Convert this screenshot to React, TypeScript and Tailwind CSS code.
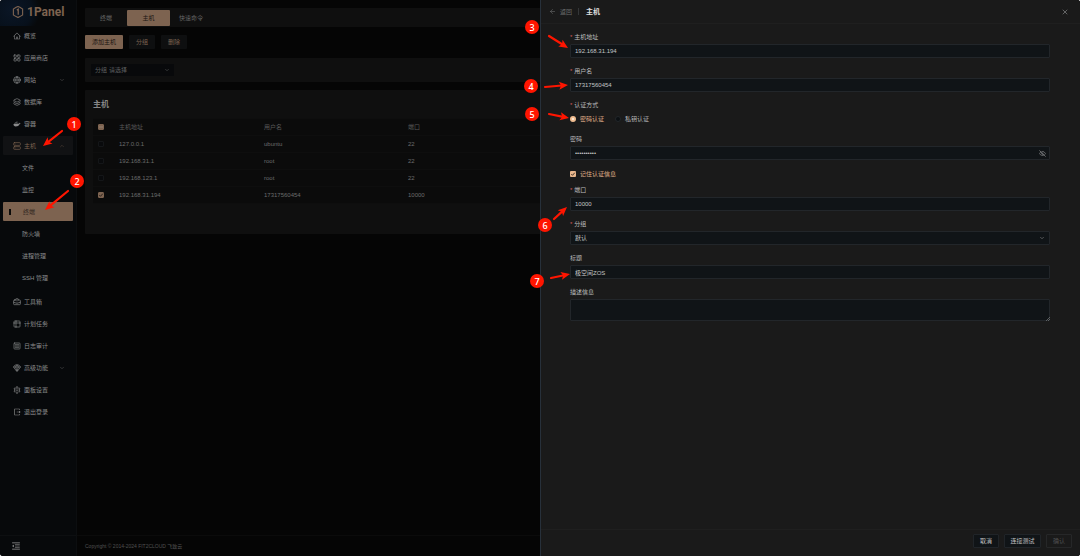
import { useState } from "react";
import type { ReactNode } from "react";
import {
    ArrowLeft,
    BriefcaseBusiness,
    ChevronDown,
    ChevronUp,
    EyeOff,
    Gem,
    Globe,
    Layers,
    LayoutGrid,
    Server,
    SquareMenu,
    Table2,
    X,
} from "lucide-react";
import { AiOutlineDocker, AiOutlineHome, AiOutlineMenuFold, AiOutlineSetting } from "react-icons/ai";
import { RiLogoutBoxRLine } from "react-icons/ri";
import clsx from "clsx";

type NavItem = { label: string; icon: ReactNode; arrow?: boolean };

const ICON = "w-2 h-2";

const topItems: NavItem[] = [
    { label: "概览", icon: <AiOutlineHome className={ICON} /> },
    { label: "应用商店", icon: <LayoutGrid className={ICON} /> },
    { label: "网站", icon: <Globe className={ICON} />, arrow: true },
    { label: "数据库", icon: <Layers className={ICON} /> },
    { label: "容器", icon: <AiOutlineDocker className={ICON} /> },
];

const hostItems = ["文件", "监控", "终端", "防火墙", "进程管理", "SSH 管理"];

const bottomItems: NavItem[] = [
    { label: "工具箱", icon: <BriefcaseBusiness className={ICON} /> },
    { label: "计划任务", icon: <Table2 className={ICON} /> },
    { label: "日志审计", icon: <SquareMenu className={ICON} /> },
    { label: "高级功能", icon: <Gem className={ICON} />, arrow: true },
    { label: "面板设置", icon: <AiOutlineSetting className={ICON} /> },
    { label: "退出登录", icon: <RiLogoutBoxRLine className={ICON} /> },
];

const hosts = [
    { addr: "127.0.0.1", user: "ubuntu", port: "22" },
    { addr: "192.168.31.1", user: "root", port: "22" },
    { addr: "192.168.123.1", user: "root", port: "22" },
    { addr: "192.168.31.194", user: "17317560454", port: "10000", checked: true },
];

// numbered steps: badge centre, then arrow start and tip
const steps = [
    { n: 1, cx: 74, cy: 124, from: [62, 131], to: [43, 146] },
    { n: 2, cx: 77, cy: 181, from: [68, 191], to: [45, 210] },
    { n: 3, cx: 532, cy: 27, from: [549, 36], to: [568, 48] },
    { n: 4, cx: 531, cy: 86, from: [545, 87], to: [568, 85] },
    { n: 5, cx: 532, cy: 114, from: [549, 114], to: [569, 118] },
    { n: 6, cx: 545, cy: 225, from: [554, 219], to: [567, 207] },
    { n: 7, cx: 537, cy: 281, from: [551, 278], to: [570, 274] },
];

function NavLink({ item }: { item: NavItem }) {
    return (
        <a href="#" className="flex h-[19px] items-center gap-[3px] pl-[10px] pr-2 text-[#8a8b8c]">
            {item.icon}
            <span className="flex-1">{item.label}</span>
            {item.arrow && <ChevronDown className="h-[6px] w-[6px] text-[#5c5d5e]" />}
        </a>
    );
}

function Sidebar() {
    return (
        <aside className="flex w-[77px] shrink-0 flex-col border-r border-[#0c0e10] bg-[#07090b]">
            <div className="flex h-[26px] items-center gap-[3px] bg-[radial-gradient(circle_at_12px_10px,#0a1626_0,#07101b_20px,transparent_28px)] pb-[2px] pl-3 text-[#7d6350]">
                <svg viewBox="0 0 24 26" className="h-3 w-3" fill="none" stroke="currentColor" strokeWidth="2.4">
                    <path d="M8 2.8 2 6.5v13L8 23M16 2.8l6 3.7v13L16 23M8 2.8 12 1l4 1.800M8 23l4 2 4-2" />
                    <path d="M9.500 9 12.500 7v12" strokeWidth="2.800" />
                </svg>
                <span className="font-['Roboto'] text-[12px] leading-none font-bold">1Panel</span>
            </div>
            <nav className="flex flex-1 flex-col gap-[3px] px-[3px]">
                {topItems.map((item) => (
                    <NavLink key={item.label} item={item} />
                ))}
                <a href="#" className="flex h-[19px] items-center gap-[3px] rounded-[1px] bg-[#111214] pl-[10px] pr-2 text-[#7d6350]">
                    <Server className={ICON} />
                    <span className="flex-1">主机</span>
                    <ChevronUp className="h-[6px] w-[6px] text-[#5c4a3e]" />
                </a>
                {hostItems.map((label) => {
                    const active = label === "终端";
                    return (
                        <a
                            key={label}
                            href="#"
                            className={clsx(
                                "flex h-[19px] items-center",
                                active ? "gap-3 rounded-[1px] bg-[#7d6350] pl-[6px] text-[#30271f]" : "pl-[19px] text-[#8a8b8c]"
                            )}
                        >
                            {active && <span className="h-[6px] w-[2px] bg-[#0b0a09]" />}
                            {label}
                        </a>
                    );
                })}
                <div className="flex flex-col gap-[3px] pt-[2px]">
                    {bottomItems.map((item) => (
                        <NavLink key={item.label} item={item} />
                    ))}
                </div>
            </nav>
            <div className="flex h-[21px] items-center border-t border-[#0d0f11] pl-[11px]">
                <button aria-label="收起菜单" className="text-[#9a9a9a]">
                    <AiOutlineMenuFold className="h-[10px] w-[10px]" />
                </button>
            </div>
        </aside>
    );
}

function Tick({ checked, mixed, label }: { checked?: boolean; mixed?: boolean; label: string }) {
    return (
        <span className="relative block h-[6px] w-[6px]">
            <input
                type="checkbox"
                aria-label={label}
                defaultChecked={checked || mixed}
                className="block h-full w-full appearance-none rounded-[1px] border border-[#141618] bg-[#090a0c] checked:border-[#7d6350] checked:bg-[#7d6350]"
            />
            {mixed && <span className="absolute inset-x-[1px] top-[2px] h-[2px] bg-[#87705f]" />}
            {checked && <CheckMark />}
        </span>
    );
}

function CheckMark() {
    return (
        <svg viewBox="0 0 6 6" className="pointer-events-none absolute inset-0 h-full w-full" fill="none" stroke="#17120e" strokeWidth="0.8">
            <path d="M1.300 3.100 2.500 4.300 4.800 1.700" />
        </svg>
    );
}

function HostList() {
    return (
        <main className="flex min-w-0 flex-1 flex-col bg-[#050505]">
            <div className="flex flex-1 flex-col px-2 pt-2">
                <div className="flex h-[19px] items-center rounded-[1px] bg-[#0f0f0f] text-[#666666]">
                    <button className="h-4 w-[42px]">终端</button>
                    <button className="h-4 w-[43px] rounded-[1px] bg-[#7d6350] text-[#1b1511]">主机</button>
                    <button className="h-4 w-[42px]">快速命令</button>
                </div>
                <div className="mt-2 flex gap-[6px]">
                    <button className="h-[14px] w-[38px] rounded-[1px] bg-[#7d6350] text-[#1b1511]">添加主机</button>
                    <button className="h-[14px] w-[26px] rounded-[1px] bg-[#0e0f10] text-[#7d6350]">分组</button>
                    <button className="h-[14px] w-[26px] rounded-[1px] bg-[#0e0f10] text-[#7d6350]">删除</button>
                </div>
                <div className="mt-[9px] flex h-6 items-center rounded-[1px] bg-[#0f0f0f] px-[6px]">
                    <div className="flex h-3 w-[83px] items-center bg-[#08090b] px-1 text-[#5f6061]">
                        <label htmlFor="group-filter">分组</label>
                        <select id="group-filter" className="flex-1 appearance-none bg-transparent pl-[2px]">
                            <option>请选择</option>
                        </select>
                        <ChevronDown className="h-[6px] w-[6px]" />
                    </div>
                </div>
                <section className="mt-2 h-36 rounded-[1px] bg-[#0f0f0f] px-2 pt-[9px]">
                    <h2 className="mb-[7px] text-[8px] leading-3 font-bold text-[#878787]">主机</h2>
                    <table className="w-full table-fixed border-collapse bg-[#0b0b0b] text-left text-[#6b6b6b]">
                        <colgroup>
                            <col className="w-[22px]" />
                            <col className="w-[145px]" />
                            <col className="w-36" />
                            <col />
                        </colgroup>
                        <thead className="text-[#585858]">
                            <tr className="h-[17px] border-y border-[#0e0e0e]">
                                <th className="pl-[5px]">
                                    <Tick mixed label="全选" />
                                </th>
                                <th className="pl-1 font-normal">主机地址</th>
                                <th className="pl-1 font-normal">用户名</th>
                                <th className="pl-1 font-normal">端口</th>
                            </tr>
                        </thead>
                        <tbody>
                            {hosts.map((h) => (
                                <tr key={h.addr} className="h-[17px] border-b border-[#0e0e0e]">
                                    <td className="pl-[5px]">
                                        <Tick checked={h.checked} label={h.addr} />
                                    </td>
                                    <td className="pl-1">{h.addr}</td>
                                    <td className="pl-1">{h.user}</td>
                                    <td className="pl-1">{h.port}</td>
                                </tr>
                            ))}
                        </tbody>
                    </table>
                </section>
            </div>
            <footer className="flex h-[21px] items-center border-t border-[#0b0b0b] px-2 text-[5px] text-[#505050]">
                Copyright © 2014-2024 FIT2CLOUD 飞致云
            </footer>
        </main>
    );
}

function Field({ id, label, required, children }: { id: string; label: string; required?: boolean; children: ReactNode }) {
    return (
        <div>
            <label htmlFor={id} className="mb-px flex h-[13px] items-center gap-[2px] text-[#bcbdbe]">
                {required && <span className="text-[#d65a5a]">*</span>}
                {label}
            </label>
            {children}
        </div>
    );
}

const INPUT =
    "block h-[14px] w-full appearance-none rounded-[1px] border border-[#22262a] bg-[#101417] px-1 text-[#c3c4c5] outline-none";

function HostDrawer() {
    const [auth, setAuth] = useState("password");
    const modes = [
        { value: "password", label: "密码认证" },
        { value: "key", label: "私钥认证" },
    ];

    return (
        <section className="absolute inset-y-0 right-0 flex w-1/2 flex-col border-l border-[#27303a] bg-[#1a1a1a]">
            <header className="flex h-6 items-center border-b border-[#1f1f1f] pr-[11px] pl-2">
                <button className="flex items-center gap-1 text-[#6b6c6d]">
                    <ArrowLeft className="h-[7px] w-[7px]" />
                    返回
                </button>
                <span className="mr-[7px] ml-[6px] h-[7px] w-px bg-[#343638]" />
                <h1 className="flex-1 text-[7px] font-bold text-[#e0e0e0]">主机</h1>
                <button aria-label="关闭" className="text-[#8a8b8c]">
                    <X className="h-2 w-2" strokeWidth={2} />
                </button>
            </header>

            <form className="flex flex-1 flex-col gap-[6px] pt-[6px] pr-[30px] pl-[29px]">
                <Field id="addr" label="主机地址" required>
                    <input id="addr" className={INPUT} defaultValue="192.168.31.194" />
                </Field>
                <Field id="user" label="用户名" required>
                    <input id="user" className={INPUT} defaultValue="17317560454" />
                </Field>
                <Field id="auth-password" label="认证方式" required>
                    <div className="flex h-[14px] items-center gap-[11px]">
                        {modes.map((m) => (
                            <label
                                key={m.value}
                                className={clsx("flex items-center gap-1", auth === m.value ? "text-[#e2b48c]" : "text-[#b5b6b7]")}
                            >
                                <input
                                    id={`auth-${m.value}`}
                                    type="radio"
                                    name="auth"
                                    checked={auth === m.value}
                                    onChange={() => setAuth(m.value)}
                                    className="h-[6px] w-[6px] appearance-none rounded-full border border-[#22262a] bg-[#0c1013] checked:border-2 checked:border-[#f0bd91] checked:bg-[#fff4e8]"
                                />
                                {m.label}
                            </label>
                        ))}
                    </div>
                </Field>
                <Field id="password" label="密码">
                    <div className="relative">
                        <input id="password" type="password" className={INPUT} defaultValue="0123456789" />
                        <button type="button" aria-label="显示密码" className="absolute inset-y-0 right-1 flex items-center text-[#9a9b9c]">
                            <EyeOff className="h-[7px] w-[7px]" />
                        </button>
                    </div>
                </Field>
                <label className="flex h-[11px] items-center gap-1 pt-[5px] text-[#e2b48c]">
                    <span className="relative block h-[6px] w-[6px]">
                        <input type="checkbox" defaultChecked className="block h-full w-full appearance-none rounded-[1px] bg-[#e8b68c]" />
                        <CheckMark />
                    </span>
                    记住认证信息
                </label>
                <Field id="port" label="端口" required>
                    <input id="port" className={INPUT} defaultValue="10000" />
                </Field>
                <Field id="group" label="分组" required>
                    <div className="relative">
                        <select id="group" className={INPUT}>
                            <option>默认</option>
                        </select>
                        <ChevronDown className="pointer-events-none absolute top-1 right-[5px] h-[6px] w-[6px] text-[#9a9b9c]" />
                    </div>
                </Field>
                <Field id="title" label="标题">
                    <input id="title" className={INPUT} defaultValue="极空间ZOS" />
                </Field>
                <Field id="desc" label="描述信息">
                    <div className="relative">
                        <textarea
                            id="desc"
                            className="block h-[22px] w-full resize-none rounded-[1px] border border-[#22262a] bg-[#101417] px-1 text-[#c3c4c5] outline-none"
                        />
                        <svg viewBox="0 0 4 4" className="pointer-events-none absolute right-0 bottom-0 h-1 w-1" stroke="#8a8b8c" strokeWidth="0.6">
                            <path d="M0 4 4 0M2 4l2-2" />
                        </svg>
                    </div>
                </Field>
            </form>

            <footer className="flex h-[27px] justify-end gap-[5px] border-t border-[#1f1f1f] pt-1 pr-2">
                <button className="h-[14px] w-[26px] rounded-[1px] border border-[#202428] bg-[#101417] text-[#c3c4c5]">取消</button>
                <button className="h-[14px] w-[37px] rounded-[1px] border border-[#202428] bg-[#101417] text-[#c3c4c5]">连接测试</button>
                <button disabled className="h-[14px] w-[26px] rounded-[1px] border border-[#262728] text-[#4d4e4f]">
                    确认
                </button>
            </footer>
        </section>
    );
}

function Steps() {
    return (
        <div className="pointer-events-none absolute inset-0 overflow-hidden">
            <svg className="absolute inset-0 h-full w-full" fill="#ff1500" stroke="#ff1500">
                {steps.map(({ n, from, to }) => {
                    const dx = to[0] - from[0];
                    const dy = to[1] - from[1];
                    const len = Math.hypot(dx, dy);
                    const angle = (Math.atan2(dy, dx) * 180) / Math.PI;
                    return (
                        <g key={n} transform={`translate(${from[0]} ${from[1]}) rotate(${angle})`}>
                            <path d={`M0 0H${len - 6}`} strokeWidth="2.2" strokeLinecap="round" />
                            <path d={`M${len} 0l-9 -4 2 4 -2 4z`} stroke="none" />
                        </g>
                    );
                })}
            </svg>
            {steps.map(({ n, cx, cy }) => (
                <span
                    key={n}
                    className="absolute flex h-[14px] w-[14px] items-center justify-center rounded-full bg-[#ff1500] font-['Noto_Sans'] text-[9px] leading-none font-medium text-white"
                    style={{ left: cx - 7, top: cy - 7 }}
                >
                    {n}
                </span>
            ))}
        </div>
    );
}

export default function App() {
    return (
        <div className="relative flex min-h-screen overflow-hidden rounded-[3px] bg-[#050505] font-['Liberation_Sans','Noto_Sans_CJK_SC',sans-serif] text-[6px] leading-[8px]">
            <Sidebar />
            <HostList />
            <HostDrawer />
            <Steps />
        </div>
    );
}
